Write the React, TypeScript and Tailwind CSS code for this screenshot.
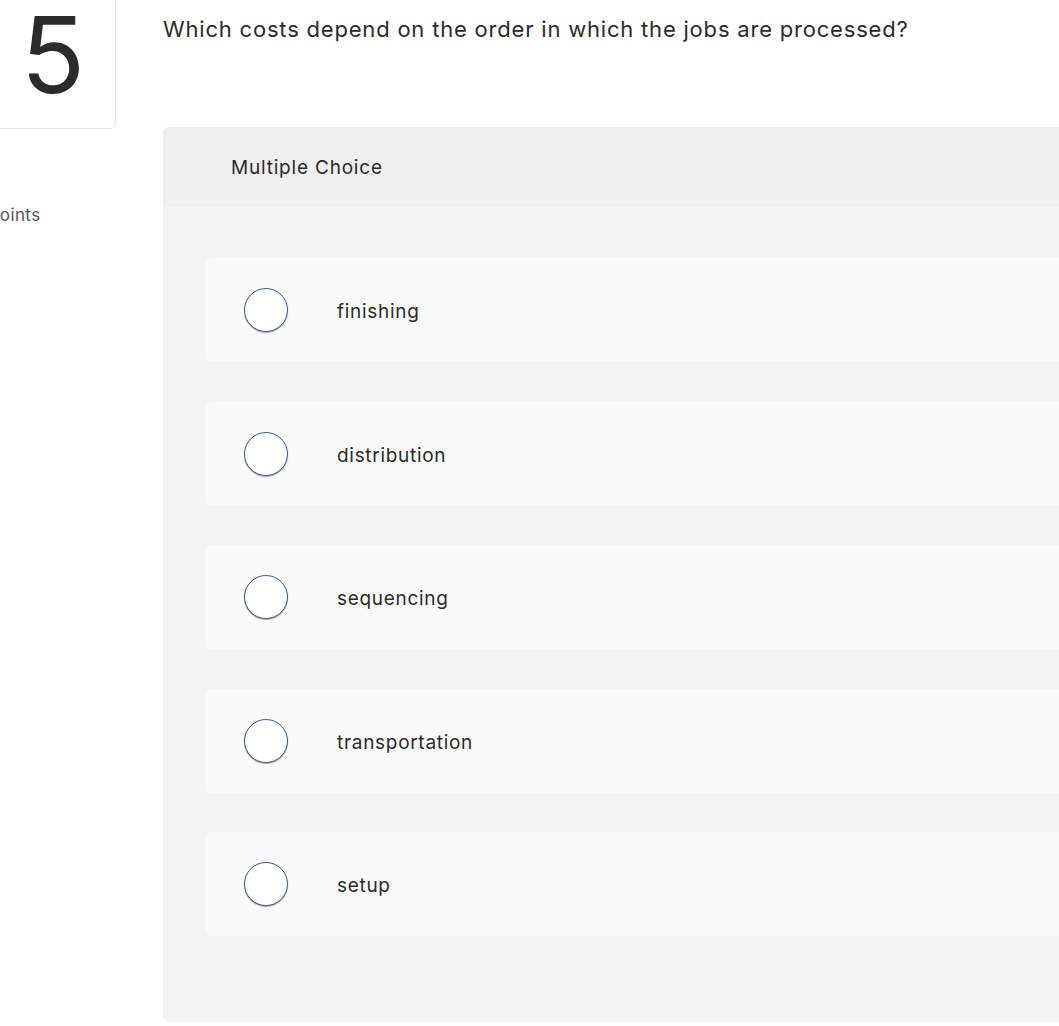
import React, { useState } from 'react';

// Question options
const options = ['finishing', 'distribution', 'sequencing', 'transportation', 'setup'];

function RadioOption({
  label,
  checked,
  onSelect,
}: {
  label: string;
  checked: boolean;
  onSelect: () => void;
}) {
  return (
    <button
      onClick={onSelect}
      className="flex items-center h-[104px] w-full rounded-md bg-[#fafafa] pl-[39px] text-left"
    >
      <span className="flex items-center justify-center w-[44px] h-[44px] rounded-full border-[1.5px] border-[#3b5d8f] bg-white shadow-[0_1px_1px_rgba(0,0,0,0.35)] shrink-0">
        {checked && <span className="w-[20px] h-[20px] rounded-full bg-[#3b5d8f]" />}
      </span>
      <span className="ml-[49px] pt-[5px] text-[19px] tracking-[0.7px] text-[#2b2b2b]">{label}</span>
    </button>
  );
}

export default function App() {
  const [selected, setSelected] = useState<number | null>(null);

  return (
    <div
      className="flex w-[1059px] h-[1026px] overflow-hidden bg-white"
      style={{ fontFamily: 'Inter, "Open Sans", sans-serif' }}
    >
      {/* Left column: question number + points */}
      <aside className="shrink-0 w-[140px] -ml-[24px] mr-[47px]">
        <div className="h-[130px] -mt-px rounded-br-md border border-[#e6e6e6] bg-white flex justify-center">
          <span className="pl-[14px] text-[106px] leading-none pt-[2px] text-[#2b2b2b]">5</span>
        </div>
        <p className="mt-[74px] ml-[13px] text-[17px] tracking-[0.4px] text-[#555]">points</p>
      </aside>

      {/* Main question area */}
      <main className="flex-1 min-w-0">
        <h1 className="pt-[13px] text-[22px] tracking-[0.8px] text-[#2b2b2b] whitespace-nowrap">
          Which costs depend on the order in which the jobs are processed?
        </h1>

        <section className="mt-[81px] w-[920px] h-[895px] rounded-md bg-[#f4f4f4] overflow-hidden">
          <div className="h-[80px] bg-[#efefef] flex items-center pl-[68px] pt-[3px] text-[19px] tracking-[0.8px] text-[#2b2b2b]">
            Multiple Choice
          </div>
          <div className="pl-[42px] pt-[51px] flex flex-col gap-[39.5px]">
            {options.map((opt, i) => (
              <RadioOption
                key={opt}
                label={opt}
                checked={selected === i}
                onSelect={() => setSelected(i)}
              />
            ))}
          </div>
        </section>
      </main>
    </div>
  );
}
